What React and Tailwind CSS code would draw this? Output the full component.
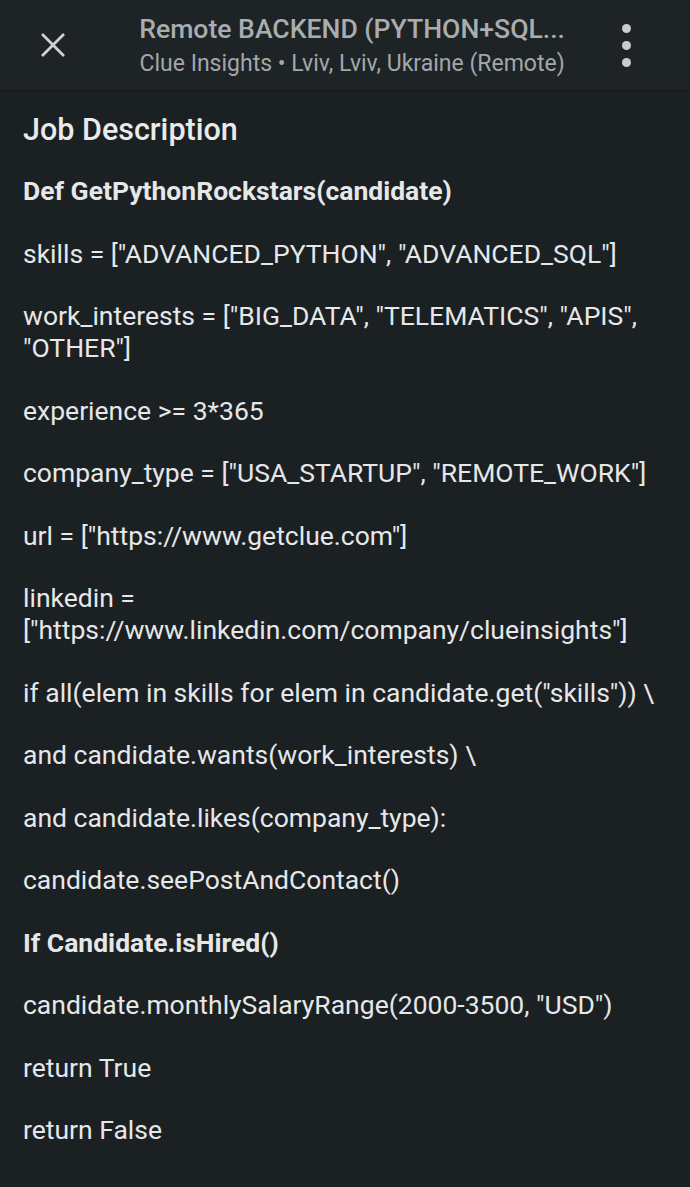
import React from "react";

const lines = [
  { t: "Def GetPythonRockstars(candidate)", bold: true },
  { t: 'skills = ["ADVANCED_PYTHON", "ADVANCED_SQL"]' },
  { t: 'work_interests = ["BIG_DATA", "TELEMATICS", "APIS", "OTHER"]' },
  { t: "experience >= 3*365" },
  { t: 'company_type = ["USA_STARTUP", "REMOTE_WORK"]' },
  { t: 'url = ["https://www.getclue.com"]' },
  { t: 'linkedin = ["https://www.linkedin.com/company/clueinsights"]' },
  { t: 'if all(elem in skills for elem in candidate.get("skills")) \\' },
  { t: "and candidate.wants(work_interests) \\" },
  { t: "and candidate.likes(company_type):" },
  { t: "candidate.seePostAndContact()" },
  { t: "If Candidate.isHired()", bold: true },
  { t: 'candidate.monthlySalaryRange(2000-3500, "USD")' },
  { t: "return True" },
  { t: "return False" },
];

export default function App() {
  return (
    <div className="min-h-[1187px] w-[690px] bg-[#1b2023] text-[#e6e7e8] font-['Roboto',sans-serif]">
      <div className="h-[91px] flex items-center bg-[#1e2326] border-b border-[#15191b]">
        <button className="w-[106px] h-full flex items-center justify-center text-[#d0d2d3]">
          <svg width="30" height="30" viewBox="0 0 24 24" fill="none" stroke="currentColor" strokeWidth="2.2" strokeLinecap="square">
            <path d="M4 4L20 20M20 4L4 20" />
          </svg>
        </button>
        <div className="flex-1 flex flex-col items-center pt-[2px] pl-[34px]">
          <div className="text-[26.6px] leading-[30px] text-[#a9adaf] font-medium whitespace-nowrap">Remote BACKEND (PYTHON+SQL...</div>
          <div className="text-[23px] leading-[30px] text-[#a3a7a9] whitespace-nowrap mt-[5px]">Clue Insights • Lviv, Lviv, Ukraine (Remote)</div>
        </div>
        <div className="w-[126px] h-full flex flex-col items-center justify-center gap-[8px] pr-[2px]">
          <span className="w-[9px] h-[9px] rounded-full bg-[#c9cbcc]" />
          <span className="w-[9px] h-[9px] rounded-full bg-[#c9cbcc]" />
          <span className="w-[9px] h-[9px] rounded-full bg-[#c9cbcc]" />
        </div>
      </div>
      <div className="pl-[23px] pr-[20px] pt-[19px] pb-[24px]">
        <h1 className="text-[30.5px] leading-[40px] font-medium text-[#e9eaeb] mb-[25px]">Job Description</h1>
        <div className="flex flex-col gap-[30.5px]">
          {lines.map((l, i) => (
            <p key={i} className={`text-[26.5px] leading-[32px] ${l.bold ? "font-bold" : ""}`}>{l.t}</p>
          ))}
        </div>
      </div>
    </div>
  );
}
